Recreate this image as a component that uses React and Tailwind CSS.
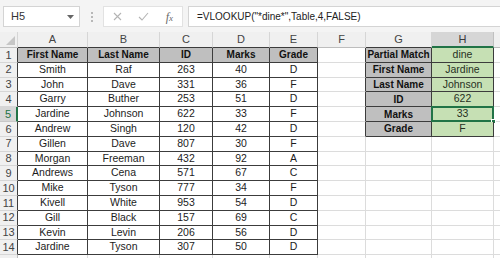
import React from 'react'

// widths of row header, A..H and a slice of I
const W = ['w-[18px]', 'w-[70px]', 'w-[72px]', 'w-[53px]', 'w-[57px]', 'w-[48px]', 'w-[48px]', 'w-[66px]', 'w-[62px]', 'w-[40px]']

const people = [
  ['Smith', 'Raf', 263, 40, 'D'],
  ['John', 'Dave', 331, 36, 'F'],
  ['Garry', 'Buther', 253, 51, 'D'],
  ['Jardine', 'Johnson', 622, 33, 'F'],
  ['Andrew', 'Singh', 120, 42, 'D'],
  ['Gillen', 'Dave', 807, 30, 'F'],
  ['Morgan', 'Freeman', 432, 92, 'A'],
  ['Andrews', 'Cena', 571, 67, 'C'],
  ['Mike', 'Tyson', 777, 34, 'F'],
  ['Kivell', 'White', 953, 54, 'D'],
  ['Gill', 'Black', 157, 69, 'C'],
  ['Kevin', 'Levin', 206, 56, 'D'],
  ['Jardine', 'Tyson', 307, 50, 'D'],
]

const lookup = [
  ['Partial Match', 'dine'],
  ['First Name', 'Jardine'],
  ['Last Name', 'Johnson'],
  ['ID', '622'],
  ['Marks', '33'],
  ['Grade', 'F'],
]

const base = 'h-full shrink-0 flex items-center justify-center border-r border-b whitespace-nowrap overflow-hidden'
const dark = 'border-r-[#3c3c3c] border-b-[#3c3c3c]'
const light = 'border-r-[#dcdcdc] border-b-[#dcdcdc]'

function Toolbar() {
  return (
    <div className="h-[32px] bg-[#f4f4f4] flex items-start pt-[6px] pl-[3px] gap-0">
      <div className="w-[77px] h-[21px] bg-white border border-[#d4d4d4] flex items-center justify-between pl-[7px] pr-[5px]">
        <span className="text-[11px] text-[#333]">H5</span>
        <svg width="7" height="4" viewBox="0 0 7 4"><path d="M0 0h7L3.5 4z" fill="#666" /></svg>
      </div>
      <div className="w-[23px] h-[21px] flex flex-col items-center justify-center gap-[2px]">
        <span className="w-[2px] h-[2px] bg-[#b8b8b8]" />
        <span className="w-[2px] h-[2px] bg-[#b8b8b8]" />
        <span className="w-[2px] h-[2px] bg-[#b8b8b8]" />
      </div>
      <div className="w-[80px] h-[21px] bg-white border border-[#e2e2e2] flex items-center">
        <div className="w-[28px] flex justify-center">
          <svg width="9" height="9" viewBox="0 0 9 9"><path d="M1 1l7 7M8 1L1 8" stroke="#b4b4b4" strokeWidth="1.1" /></svg>
        </div>
        <div className="w-[26px] flex justify-center">
          <svg width="11" height="9" viewBox="0 0 11 9"><path d="M1 5l3 3 6-7" stroke="#b4b4b4" strokeWidth="1.1" fill="none" /></svg>
        </div>
        <div className="w-[26px] flex justify-center">
          <span className="text-[12px] italic text-[#6a6a6a]" style={{ fontFamily: '"Liberation Serif", serif' }}>f<span className="text-[9px]">x</span></span>
        </div>
      </div>
      <div className="ml-[5px] flex-1 h-[21px] bg-white border border-[#d4d4d4] border-r-0 flex items-center pl-[8px]">
        <span className="text-[10px] text-[#222]">=VLOOKUP("*dine*",Table,4,FALSE)</span>
      </div>
    </div>
  )
}

function ColumnHeader() {
  // the last column (I) is only a sliver, so its letter is off-screen
  const letters = ['A', 'B', 'C', 'D', 'E', 'F', 'G', 'H', '']
  return (
    <div className="h-[16px] flex bg-[#f0f0f0]">
      <div className={`${W[0]} ${base} border-r-[#d6d6d6] border-b-[#bdbdbd] items-end justify-end pr-[2px] pb-[2px]`}>
        <svg width="9" height="9" viewBox="0 0 9 9"><path d="M9 0v9H0z" fill="#c6c6c6" /></svg>
      </div>
      {letters.map((l, i) => {
        let cls = 'border-r-[#d6d6d6] border-b-[#3c3c3c] text-[#444]'
        if (l === 'F' || l === '') cls = 'border-r-[#d6d6d6] border-b-[#bdbdbd] text-[#444]'
        if (l === 'H') cls = 'bg-[#d6d6d6] border-r-[#c0c0c0] border-b-2 border-b-[#217346] text-[#3a3a3a]'
        return (
          <div key={i} className={`${W[i + 1]} ${base} ${cls} text-[11px]`}>{l}</div>
        )
      })}
    </div>
  )
}

function Row({ n }) {
  const p = n >= 2 && n <= 14 ? people[n - 2] : null
  const lk = n <= 6 ? lookup[n - 1] : null
  const selected = n === 5
  const rowHead = selected
    ? 'bg-[#d6d6d6] text-[#217346] border-r-2 border-r-[#217346] border-b-[#c8c8c8]'
    : n <= 14
      ? 'bg-[#f0f0f0] text-[#444] border-r-[#3c3c3c] border-b-[#d6d6d6]'
      : 'bg-[#f0f0f0] text-[#444] border-r-[#bdbdbd] border-b-[#d6d6d6]'

  const tableCells = n === 1
    ? ['First Name', 'Last Name', 'ID', 'Marks', 'Grade']
    : p
      ? p
      : ['', '', '', '', '']
  const inTable = n <= 14

  return (
    <div className="h-[14.8px] flex">
      <div className={`${W[0]} ${base} ${rowHead} text-[11px]`}>{n <= 14 ? n : ''}</div>
      {tableCells.map((v, i) => (
        <div
          key={i}
          className={`${W[i + 1]} ${base} ${inTable ? dark : light} ${n === 1 ? 'bg-[#bfbfbf] font-bold text-[10px] text-[#111]' : 'text-[10.5px] text-[#1c1c1c]'}`}
        >
          {v}
        </div>
      ))}
      <div className={`${W[6]} ${base} ${lk ? 'border-r-[#3c3c3c] border-b-[#dcdcdc]' : light}`} />
      <div className={`${W[7]} ${base} ${lk ? `${dark} bg-[#bfbfbf] font-bold text-[10px] text-[#111]` : light}`}>
        {lk ? lk[0] : ''}
      </div>
      <div className={`${W[8]} ${base} relative overflow-visible ${lk ? `${dark} bg-[#c6e0b4] text-[10.5px] text-[#26301f]` : light}`}>
        {lk ? lk[1] : ''}
        {selected && (
          <div className="absolute -left-[1px] -top-[1px] -right-[1px] -bottom-[1px] border-2 border-[#217346]">
            <div className="absolute -right-[4px] -bottom-[4px] w-[5px] h-[5px] bg-[#217346] border border-white" />
          </div>
        )}
      </div>
      <div className={`${W[9]} ${base} ${light}`} />
    </div>
  )
}

export default function App() {
  const rows = Array.from({ length: 15 }, (_, i) => i + 1)
  return (
    <div
      className="w-[500px] h-[258px] overflow-hidden bg-white"
      style={{ fontFamily: '"Liberation Sans", Arial, sans-serif' }}
    >
      <Toolbar />
      <ColumnHeader />
      {rows.map(n => (
        <Row key={n} n={n} />
      ))}
    </div>
  )
}
